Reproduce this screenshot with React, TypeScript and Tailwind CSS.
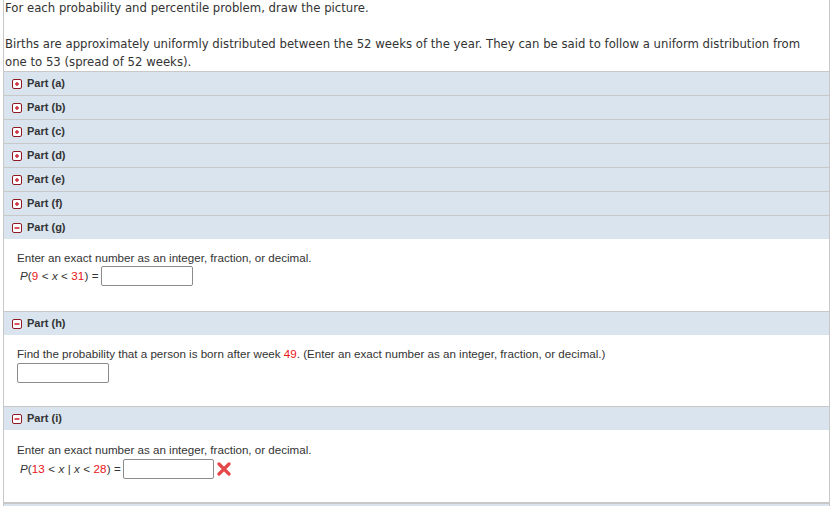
import React from 'react';

const PARTS_CLOSED = ['a', 'b', 'c', 'd', 'e', 'f'];

function ToggleIcon({ open }: { open: boolean }) {
  return (
    <svg width="10" height="10" viewBox="0 0 10 10" className="shrink-0">
      <rect x="0.5" y="0.5" width="9" height="9" rx="1.5" fill="#fff" stroke="#8e1b24" />
      {open ? (
        <rect x="2.5" y="4" width="5" height="2" fill="#d9545f" />
      ) : (
        <g fill="#c9303c">
          <rect x="4.25" y="3" width="1.5" height="4" />
          <rect x="3" y="4.25" width="4" height="1.5" />
        </g>
      )}
    </svg>
  );
}

function PartHeader({ label, open }: { label: string; open: boolean }) {
  return (
    <div className="flex h-[24px] items-center gap-[5px] border-t border-[#c8c8c8] bg-[#d9e4ee] pl-[8px]">
      <ToggleIcon open={open} />
      <span className="text-[11px] font-bold text-[#333]">Part ({label})</span>
    </div>
  );
}

function Answer({ className = 'w-[92px]' }: { className?: string }) {
  return <div className={`h-[20px] rounded-[2px] border border-[#8c8c8c] bg-white ${className}`} />;
}

function WrongMark() {
  return (
    <svg width="14" height="14" viewBox="0 0 14 14" className="ml-[3px]">
      <path d="M2 2 L12 12 M12 2 L2 12" stroke="#e5484a" strokeWidth="3.2" strokeLinecap="round" />
    </svg>
  );
}

const Red = ({ children }: { children: React.ReactNode }) => <span className="text-[#e8141b]">{children}</span>;

export default function App() {
  return (
    <div className="h-[506px] w-[833px] overflow-hidden bg-white px-[3px]">
      <div className="border-x border-[#c8c8c8] text-[#333]">
        {/* intro */}
        <div className="pl-[1px] font-['DejaVu_Sans',sans-serif] text-[11.7px]">
          <p className="h-[17px] leading-[17px]">For each probability and percentile problem, draw the picture.</p>
          <p className="mt-[18px] pr-[16px] leading-[18px]">
            Births are approximately uniformly distributed between the 52 weeks of the year. They can be said to follow a uniform
            distribution from one to 53 (spread of 52 weeks).
          </p>
        </div>

        <div className="font-['Liberation_Sans',Arial,sans-serif]">
          {PARTS_CLOSED.map((p) => (
            <PartHeader key={p} label={p} open={false} />
          ))}

          <PartHeader label="g" open />
          <div className="h-[72px] pl-[13px] pt-[12px] text-[11.6px]">
            <p className="leading-[14px]">Enter an exact number as an integer, fraction, or decimal.</p>
            <div className="mt-[1px] flex items-center pl-[3px]">
              <span className="mr-[2px] leading-[20px] tracking-[0.1px]">
                <i>P</i>(<Red>9</Red> &lt; <i>x</i> &lt; <Red>31</Red>) =
              </span>
              <Answer />
            </div>
          </div>

          <PartHeader label="h" open />
          <div className="h-[71px] pl-[13px] pt-[12px] text-[11.6px]">
            <p className="leading-[14px]">
              Find the probability that a person is born after week <Red>49</Red>. (Enter an exact number as an integer, fraction, or decimal.)
            </p>
            <div className="mt-[2px] flex">
              <Answer />
            </div>
          </div>

          <PartHeader label="i" open />
          <div className="h-[72px] pl-[13px] pt-[13px] text-[11.6px]">
            <p className="leading-[14px]">Enter an exact number as an integer, fraction, or decimal.</p>
            <div className="mt-[2px] flex items-center pl-[3px]">
              <span className="mr-[2px] leading-[20px] tracking-[0.1px]">
                <i>P</i>(<Red>13</Red> &lt; <i>x</i> | <i>x</i> &lt; <Red>28</Red>) =
              </span>
              <Answer className="w-[91px]" />
              <WrongMark />
            </div>
          </div>

          <div className="h-[24px] border-t-2 border-[#c8c8c8] bg-[#d9e4ee]" />
        </div>
      </div>
    </div>
  );
}
